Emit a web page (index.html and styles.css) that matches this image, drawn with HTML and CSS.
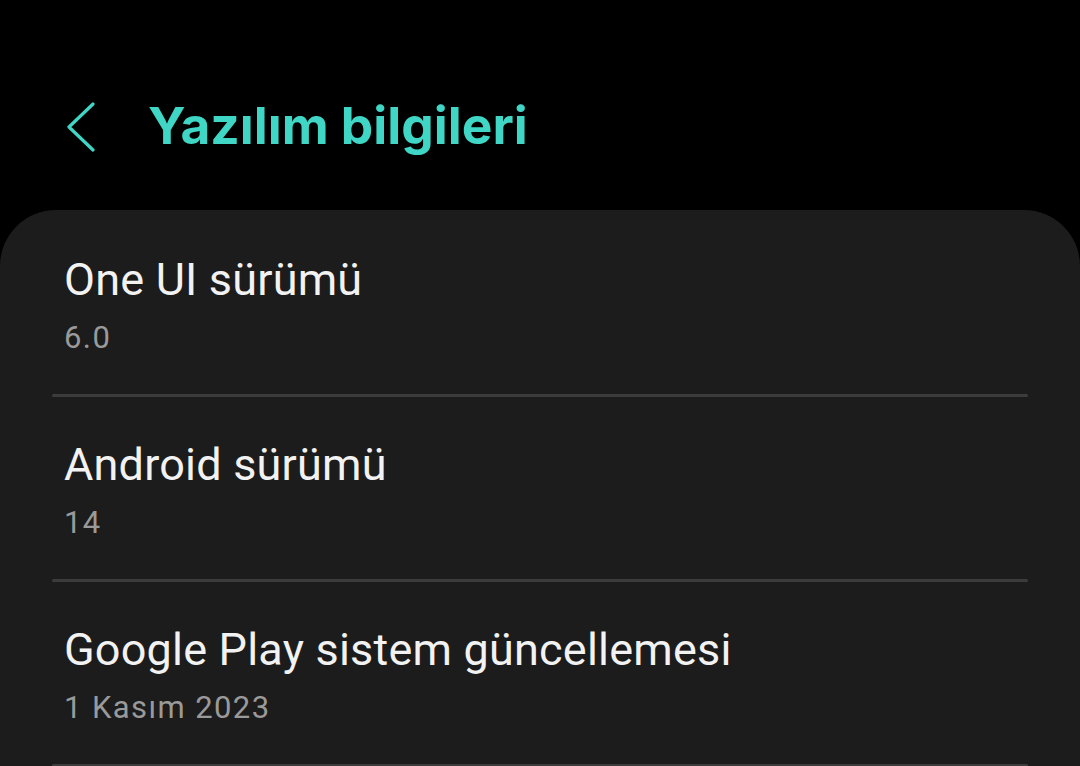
FILE: index.html
```html
<!DOCTYPE html>
<html lang="tr">
<head>
<meta charset="utf-8">
<link rel="stylesheet" href="styles.css">
</head>
<body>
<header class="header">
  <svg class="back" width="30" height="50" viewBox="0 0 30 50">
    <path d="M27 2 L3 25 L27 48" fill="none" stroke="#3fd6c6" stroke-width="3.2" stroke-linecap="round" stroke-linejoin="round"/>
  </svg>
  <h1 class="title">Yazılım bilgileri</h1>
</header>
<main class="card">
  <div class="row">
    <div class="row-title">One UI sürümü</div>
    <div class="row-sub">6.0</div>
  </div>
  <div class="divider"></div>
  <div class="row">
    <div class="row-title">Android sürümü</div>
    <div class="row-sub">14</div>
  </div>
  <div class="divider"></div>
  <div class="row">
    <div class="row-title">Google Play sistem güncellemesi</div>
    <div class="row-sub">1 Kasım 2023</div>
  </div>
  <div class="divider"></div>
</main>
</body>
</html>
```
FILE: styles.css
```css
html, body {
  margin: 0;
  padding: 0;
  background: #000;
  width: 1080px;
  height: 766px;
  overflow: hidden;
}
body {
  font-family: Roboto, "Noto Sans", sans-serif;
}
.header {
  height: 210px;
  display: flex;
  align-items: center;
  padding: 44px 0 0 66px;
  box-sizing: border-box;
  gap: 52px;
}
.back {
  flex: none;
}
.title {
  margin: 0 0 5px 0;
  font-family: Inter, "Noto Sans", sans-serif;
  font-weight: 700;
  font-size: 51.5px;
  color: #3fd6c6;
}
.card {
  background: #1c1c1c;
  border-radius: 56px 56px 0 0;
  height: 556px;
  padding: 2px 52px 0;
}
.row {
  height: 182px;
  box-sizing: border-box;
  padding: 40px 0 0 12px;
}
.row-title {
  color: #f2f2f2;
  font-size: 45px;
  line-height: 56px;
  letter-spacing: 0.2px;
}
.row-sub {
  margin-top: 10px;
  color: #9a9a9a;
  font-size: 31px;
  line-height: 40px;
  letter-spacing: 1.4px;
}
.divider {
  height: 3px;
  border-radius: 2px;
  background: #3c3c3c;
}
```
